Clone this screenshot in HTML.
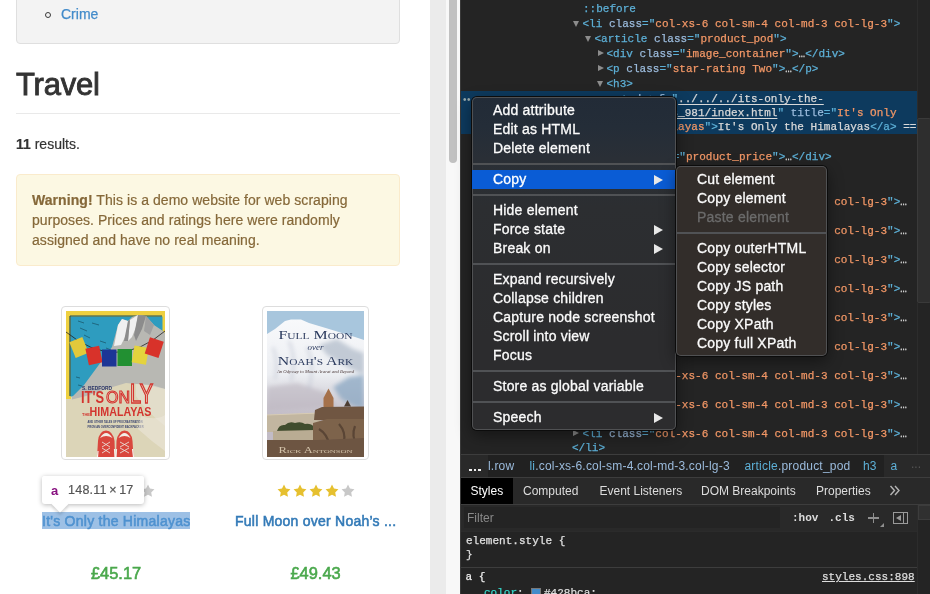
<!DOCTYPE html>
<html><head><meta charset="utf-8"><style>
*{margin:0;padding:0;box-sizing:border-box}
html,body{width:930px;height:594px;overflow:hidden;background:#fff;font-family:"Liberation Sans",sans-serif}
body{position:relative}
.a{position:absolute;white-space:nowrap}
.m{position:absolute;white-space:nowrap;font-family:"Liberation Mono",monospace;font-size:11px;line-height:14px;color:#d5d5d5;-webkit-text-stroke:.25px currentColor;letter-spacing:.02px}
.tg{color:#5db0d7}.an{color:#9bbbdc}.av{color:#f29766}.tx{color:#d9d9d9}.q{color:#a3bfd9}
.u{text-decoration:underline;text-underline-offset:2px}
.tri{position:absolute;width:0;height:0}
.td{border-left:3.5px solid transparent;border-right:3.5px solid transparent;border-top:6px solid #8c8c8c}
.tr{border-top:3.5px solid transparent;border-bottom:3.5px solid transparent;border-left:6px solid #8c8c8c}
.menu{position:absolute;border-radius:5px;box-shadow:0 0 0 1px #0c0c0c,inset 0 0 0 1px #505153,0 5px 16px rgba(0,0,0,.45)}
.mi{position:absolute;left:0;right:0;height:19px;font-size:14px;line-height:19px;color:#fbfbfb;padding-left:21px;letter-spacing:.2px;white-space:nowrap;-webkit-text-stroke:.3px currentColor}
.mi.sel{background:#0a5cd5;color:#fff}
.mi.dis{color:#6b6b6b}
.sep{position:absolute;left:1px;right:1px;height:2px;background:#505255}
.arr{position:absolute;right:13px;top:5px;width:0;height:0;border-left:9px solid #e8e8e8;border-top:5px solid transparent;border-bottom:5px solid transparent}
</style></head><body>
<div style="position:absolute;left:0;top:0;width:930px;height:594px;overflow:hidden;will-change:transform">
<div class="a" style="left:16px;top:-10px;width:384px;height:54px;background:#f3f3f3;border:1px solid #dfdfdf;border-radius:4px"></div>
<div class="a" style="left:45px;top:11.8px;width:6px;height:6px;border:1.7px solid #3a3a3a;border-radius:50%"></div>
<div class="a" style="left:61px;top:6px;font-size:14px;line-height:16px;color:#428bca;-webkit-text-stroke:.25px currentColor">Crime</div>
<div class="a" style="left:16px;top:67px;font-size:31px;line-height:35px;color:#333;-webkit-text-stroke:.9px #333;letter-spacing:-.2px">Travel</div>
<div class="a" style="left:16px;top:113px;width:384px;height:1px;background:#e9e9e9"></div>
<div class="a" style="left:16px;top:136px;font-size:14px;line-height:16px;color:#333;-webkit-text-stroke:.2px currentColor"><b>11</b> results.</div>
<div class="a" style="left:16px;top:174px;width:384px;height:92px;background:#fcf8e3;border:1px solid #faebcc;border-radius:4px"></div>
<div class="a" style="left:32px;top:190px;font-size:14px;line-height:20px;color:#86693a;-webkit-text-stroke:.2px currentColor;letter-spacing:.06px"><b>Warning!</b> This is a demo website for web scraping<br>purposes. Prices and ratings here were randomly<br>assigned and have no real meaning.</div>
<div class="a" style="left:61px;top:306px;width:109px;height:154px;border:1px solid #ddd;border-radius:4px;background:#fff"></div>
<div class="a" style="left:262px;top:306px;width:107px;height:154px;border:1px solid #ddd;border-radius:4px;background:#fff"></div>
<svg class="a" style="left:66px;top:310.5px" width="99" height="146" viewBox="0 0 99 146">
<defs><filter id="bl1" x="-5%" y="-5%" width="110%" height="110%"><feGaussianBlur stdDeviation=".45"/></filter></defs>
<g filter="url(#bl1)">
<rect width="99" height="146" fill="#dcd5b8"/>
<path d="M0 0 H99 V24 H96 V6 H5 V88 H0 Z" fill="#eed040"/>
<rect x="4.5" y="5.5" width="92" height="80" fill="#2d9cbf"/>
<path d="M4 5 H96 M4 5 V85" stroke="#1d4a5a" stroke-width="1.2"/>
<path d="M6 86 L18 74 L46 36 L52 14 L56 8 L62 10 L66 6 L72 4 L80 5 L88 14 L97 20 L99 22 L99 100 L6 100 Z" fill="#b8b8b3"/>
<path d="M48 35 L52 14 L56 8 L62 10 L60 24 L55 34 Z M64 9 L72 4 L70 16 L66 26 L62 30 Z" fill="#f0f0f0"/>
<path d="M62 10 L64 9 L62 30 L58 30 Z M72 4 L80 5 L76 18 L70 30 L68 24 Z" fill="#8c8c8c"/>
<path d="M80 5 L88 14 L84 24 L78 20 Z" fill="#a0a0a0"/>
<path d="M0 90 L20 85 L40 78 L60 72 L80 74 L99 78 L99 146 L0 146 Z" fill="#dcd5b8"/>
<path d="M70 73 L86 74 L99 78 L99 115 Q80 100 70 85 Z" fill="#e6e2d6" opacity=".6"/>
<path d="M12 10 l6 2 M14 17 l7 3 M26 12 l7 2 M18 24 l6 3 M34 30 l6 2 M40 37 l5 2 M10 66 l4 1 M12 74 l4 1" stroke="#1d5a70" stroke-width=".8"/>
<path d="M0 21 Q50 62 99 20" fill="none" stroke="#222" stroke-width=".8"/>
<rect x="6" y="28" width="14" height="17" fill="#e2c93a" transform="rotate(-22 13 36.5)"/>
<rect x="21" y="36" width="14" height="17" fill="#d8322c" transform="rotate(-12 28 44.5)"/>
<rect x="36" y="38.5" width="14.5" height="17" fill="#1f3596"/>
<rect x="51.5" y="38" width="14.5" height="17" fill="#229033"/>
<rect x="67" y="35.5" width="14.5" height="17" fill="#e4d33c" transform="rotate(10 74 44)"/>
<rect x="81" y="28" width="14.5" height="17" fill="#d8322c" transform="rotate(18 88 36.5)"/>
<text x="16" y="78.5" font-family="Liberation Sans" font-weight="bold" font-size="6.2" fill="#2b3566" textLength="30" lengthAdjust="spacingAndGlyphs">S. BEDFORD</text>
<text x="15" y="92" font-family="Liberation Sans" font-weight="bold" font-size="16" fill="#d3352f" textLength="23" lengthAdjust="spacingAndGlyphs">IT'S</text>
<text x="40" y="92" font-family="Liberation Sans" font-size="17" fill="#ecdcc8" stroke="#d3352f" stroke-width="1.1" textLength="24" lengthAdjust="spacingAndGlyphs">ON</text>
<text x="64" y="92" font-family="Liberation Sans" font-size="27" fill="#ecdcc8" stroke="#d3352f" stroke-width="1.5" textLength="23" lengthAdjust="spacingAndGlyphs">LY</text>
<text x="16" y="105.3" font-family="Liberation Sans" font-weight="bold" font-size="4" fill="#d3352f">THE</text>
<text x="23.6" y="105.3" font-family="Liberation Sans" font-weight="bold" font-size="13.5" fill="#d3352f" textLength="61.7" lengthAdjust="spacingAndGlyphs">HIMALAYAS</text>
<text x="21.6" y="111.9" font-family="Liberation Sans" font-weight="bold" font-size="3.2" fill="#3a4470" textLength="55" lengthAdjust="spacingAndGlyphs">AND OTHER TALES OF PROCRASTINATION</text>
<text x="21.6" y="117" font-family="Liberation Sans" font-weight="bold" font-size="3.2" fill="#3a4470" textLength="56" lengthAdjust="spacingAndGlyphs">FROM AN OVERCONFIDENT BACKPACKER</text>
<path d="M31 146 L32 130 Q33 120 40 119.5 Q47 120 48.5 130 L49 146 Z" fill="#d9473d"/>
<path d="M50 146 L50.5 130 Q52 120 58.5 119.5 Q65.5 120 66.5 130 L67.5 146 Z" fill="#d9473d"/>
<path d="M34 127 Q40 117 46.5 127 Q40 123 34 127 Z M52.5 127 Q58.5 117 64.5 127 Q58.5 123 52.5 127 Z" fill="#f2ede6"/>
<path d="M36 131 L44 136 M44 131 L36 136 M36 137 L44 142 M44 137 L36 142 M54 131 L63 136 M63 131 L54 136 M54 137 L63 142 M63 137 L54 142" stroke="#e9ddd6" stroke-width=".9"/>
<path d="M32 140 L31.5 146 M48.5 138 L49 146 M50.5 138 L50 146 M66.5 138 L67.5 146" stroke="#f4eee8" stroke-width="1.2"/>
<path d="M75 105 Q90 110 99 104 L99 140 Q85 130 72 118 Z" fill="#ece8dc" opacity=".55"/>
</g>
</svg>
<svg class="a" style="left:267px;top:310.5px" width="97" height="146" viewBox="0 0 97 146">
<defs>
<filter id="bl2" x="-5%" y="-5%" width="110%" height="110%"><feGaussianBlur stdDeviation=".5"/></filter><filter id="bl3" x="-20%" y="-20%" width="140%" height="140%"><feGaussianBlur stdDeviation="2"/></filter>
<linearGradient id="mt" x1="0" y1="0" x2="0" y2="1"><stop offset="0" stop-color="#f8f9fb"/><stop offset=".4" stop-color="#eceef2"/><stop offset=".55" stop-color="#d6d5dc"/><stop offset=".7" stop-color="#c2bcc6"/></linearGradient>
</defs>
<g filter="url(#bl2)">
<rect width="97" height="146" fill="#a8c6dd"/>
<path d="M0 23 L8 18 L18 10 L24 8.5 L34 8.5 L42 12 L52 15 L62 18 L75 22 L88 26 L97 29 L97 146 L0 146 Z" fill="url(#mt)"/>
<g filter="url(#bl3)">
<path d="M52 34 L70 28 L86 38 L97 42 L97 64 L84 58 L70 50 L60 44 Z" fill="#aeb9c8" opacity=".7"/>
<path d="M66 76 L82 66 L97 64 L97 98 L86 95 L74 88 Z" fill="#8faac4" opacity=".8"/>
<path d="M0 76 L30 72 L60 82 L70 96 L0 100 Z" fill="#bdb6c0" opacity=".6"/>
<path d="M6 36 Q12 52 8 68 M22 30 Q30 48 24 70 M40 36 Q48 54 42 78" stroke="#b0b8c8" stroke-width="2" fill="none" opacity=".6"/>
</g>
<path d="M0 104 L53 102 L53 121 L0 121 Z" fill="#c2b6a0"/>
<path d="M0 104 L53 102" stroke="#d8ccb4" stroke-width="1"/>
<path d="M56.5 98 L56.5 87 L61.5 77.5 L66.5 87 L66.5 98 Z" fill="#a5714b"/>
<path d="M47 109 L48 99 L55 96 L97 95.5 L97 110 Z" fill="#6f5643"/>
<path d="M77 95.5 L80.5 89 L84 95.5 Z" fill="#4e3c30"/>
<path d="M10 120 Q12 113 18 114 Q22 110 28 112 Q34 110 38 113 Q44 112 47 116 L47 120 Z" fill="#414d2e"/>
<path d="M6 120 L48 119 L48 129 L6 130 Z" fill="#b9ac93"/>
<path d="M46 146 L46 112 L60 108 L97 108 L97 146 Z" fill="#7d644c"/>
<path d="M52 118 q8 5 10 15 M72 113 q7 8 5 18 M88 115 q-4 10 2 20" stroke="#5a4535" stroke-width="2.2" fill="none"/>
<path d="M0 129 L50 129 L97 127 L97 146 L0 146 Z" fill="#6d5543"/>
<text x="48.5" y="28.1" text-anchor="middle" font-family="Liberation Serif" font-size="12.5" fill="#2b3a5e" style="font-variant:small-caps" textLength="74" lengthAdjust="spacingAndGlyphs">Full Moon</text>
<text x="48.5" y="38.5" text-anchor="middle" font-family="Liberation Serif" font-style="italic" font-size="8" fill="#2b3a5e" textLength="16" lengthAdjust="spacingAndGlyphs">over</text>
<text x="48.5" y="53.7" text-anchor="middle" font-family="Liberation Serif" font-size="12.5" fill="#2b3a5e" style="font-variant:small-caps" textLength="75.5" lengthAdjust="spacingAndGlyphs">Noah's Ark</text>
<text x="48.5" y="61.8" text-anchor="middle" font-family="Liberation Serif" font-style="italic" font-size="4.2" fill="#4a3838" textLength="77" lengthAdjust="spacingAndGlyphs">An Odyssey to Mount Ararat and Beyond</text>
<text x="48.5" y="141.6" text-anchor="middle" font-family="Liberation Serif" font-size="7.5" fill="#d3c3a9" style="font-variant:small-caps" textLength="74" lengthAdjust="spacingAndGlyphs">Rick Antonson</text>
</g>
</svg>
<svg class="a" style="left:76.5px;top:483.5px" width="14" height="14" viewBox="0 0 24 24"><path d="M12 1l3.4 6.9 7.6 1.1-5.5 5.4 1.3 7.6L12 18.4l-6.8 3.6 1.3-7.6L1 9l7.6-1.1z" fill="#e6c02f"/></svg>
<svg class="a" style="left:92.5px;top:483.5px" width="14" height="14" viewBox="0 0 24 24"><path d="M12 1l3.4 6.9 7.6 1.1-5.5 5.4 1.3 7.6L12 18.4l-6.8 3.6 1.3-7.6L1 9l7.6-1.1z" fill="#e6c02f"/></svg>
<svg class="a" style="left:108.5px;top:483.5px" width="14" height="14" viewBox="0 0 24 24"><path d="M12 1l3.4 6.9 7.6 1.1-5.5 5.4 1.3 7.6L12 18.4l-6.8 3.6 1.3-7.6L1 9l7.6-1.1z" fill="#c8c8c8"/></svg>
<svg class="a" style="left:124.5px;top:483.5px" width="14" height="14" viewBox="0 0 24 24"><path d="M12 1l3.4 6.9 7.6 1.1-5.5 5.4 1.3 7.6L12 18.4l-6.8 3.6 1.3-7.6L1 9l7.6-1.1z" fill="#c8c8c8"/></svg>
<svg class="a" style="left:140.5px;top:483.5px" width="14" height="14" viewBox="0 0 24 24"><path d="M12 1l3.4 6.9 7.6 1.1-5.5 5.4 1.3 7.6L12 18.4l-6.8 3.6 1.3-7.6L1 9l7.6-1.1z" fill="#c8c8c8"/></svg>
<svg class="a" style="left:276.5px;top:483.5px" width="14" height="14" viewBox="0 0 24 24"><path d="M12 1l3.4 6.9 7.6 1.1-5.5 5.4 1.3 7.6L12 18.4l-6.8 3.6 1.3-7.6L1 9l7.6-1.1z" fill="#e6c02f"/></svg>
<svg class="a" style="left:292.5px;top:483.5px" width="14" height="14" viewBox="0 0 24 24"><path d="M12 1l3.4 6.9 7.6 1.1-5.5 5.4 1.3 7.6L12 18.4l-6.8 3.6 1.3-7.6L1 9l7.6-1.1z" fill="#e6c02f"/></svg>
<svg class="a" style="left:308.5px;top:483.5px" width="14" height="14" viewBox="0 0 24 24"><path d="M12 1l3.4 6.9 7.6 1.1-5.5 5.4 1.3 7.6L12 18.4l-6.8 3.6 1.3-7.6L1 9l7.6-1.1z" fill="#e6c02f"/></svg>
<svg class="a" style="left:324.5px;top:483.5px" width="14" height="14" viewBox="0 0 24 24"><path d="M12 1l3.4 6.9 7.6 1.1-5.5 5.4 1.3 7.6L12 18.4l-6.8 3.6 1.3-7.6L1 9l7.6-1.1z" fill="#e6c02f"/></svg>
<svg class="a" style="left:340.5px;top:483.5px" width="14" height="14" viewBox="0 0 24 24"><path d="M12 1l3.4 6.9 7.6 1.1-5.5 5.4 1.3 7.6L12 18.4l-6.8 3.6 1.3-7.6L1 9l7.6-1.1z" fill="#c8c8c8"/></svg>
<div class="a" style="left:42px;top:512px;width:148px;height:17px;background:#9dc0e5"></div>
<div class="a" style="left:42px;top:513px;font-size:14px;line-height:17px;color:#4f92d0;letter-spacing:.25px;-webkit-text-stroke:.55px currentColor">It's Only the Himalayas</div>
<div class="a" style="left:235px;top:513px;font-size:14px;line-height:17px;color:#337ab7;letter-spacing:.24px;-webkit-text-stroke:.55px currentColor">Full Moon over Noah’s ...</div>
<div class="a" style="left:91px;top:564px;font-size:16.4px;line-height:19px;color:#4aa84c;-webkit-text-stroke:.6px currentColor">£45.17</div>
<div class="a" style="left:290.5px;top:564px;font-size:16.4px;line-height:19px;color:#4aa84c;-webkit-text-stroke:.6px currentColor">£49.43</div>
<div class="a" style="left:42px;top:476px;width:102px;height:28px;background:#fff;border-radius:3px;box-shadow:0 1px 5px rgba(0,0,0,.28)"></div>
<div class="a" style="left:54px;top:498px;width:12px;height:12px;background:#fff;transform:rotate(45deg);box-shadow:2px 2px 3px rgba(0,0,0,.15)"></div>
<div class="a" style="left:42px;top:476px;width:102px;height:26px;background:#fff;border-radius:3px"></div>
<div class="a" style="left:51px;top:483px;font-size:13px;line-height:15px;color:#881280;font-weight:bold">a</div>
<div class="a" style="left:68px;top:483px;font-size:12.5px;line-height:15px;color:#555;letter-spacing:.25px;-webkit-text-stroke:.2px currentColor">148.11<span style="letter-spacing:0"> × </span>17</div>
<div class="a" style="left:430px;top:0;width:16px;height:594px;background:#ebebeb"></div>
<div class="a" style="left:446px;top:0;width:14px;height:594px;background:#f8f8f8"></div>
<div class="a" style="left:449px;top:-6px;width:8px;height:169px;background:#c1c1c1;border-radius:4px"></div>
<div class="a" style="left:460px;top:0;width:470px;height:594px;background:#242424"></div>
<div class="a" style="left:460px;top:0;width:1px;height:594px;background:#3a3a3a"></div>
<div class="a" style="left:461px;top:91px;width:456px;height:43px;background:#0d3a5e"></div>
<div class="a" style="left:463px;top:97px;font-size:10px;line-height:6px;color:#9aa;letter-spacing:.5px">••</div>
<div class="m" style="left:583px;top:2px"><span class="tg">::before</span></div>
<div class="tri td" style="left:573px;top:21px"></div><div class="m" style="left:582.5px;top:17px"><span class="tg">&lt;li</span><span class="an"> class</span><span class="tg">="</span><span class="av">col-xs-6 col-sm-4 col-md-3 col-lg-3</span><span class="tg">"</span><span class="tg">&gt;</span></div>
<div class="tri td" style="left:585px;top:36px"></div><div class="m" style="left:594.5px;top:32px"><span class="tg">&lt;article</span><span class="an"> class</span><span class="tg">="</span><span class="av">product_pod</span><span class="tg">"</span><span class="tg">&gt;</span></div>
<div class="tri tr" style="left:597.5px;top:50px"></div><div class="m" style="left:606.5px;top:47px"><span class="tg">&lt;div</span><span class="an"> class</span><span class="tg">="</span><span class="av">image_container</span><span class="tg">"</span><span class="tg">&gt;</span><span class="tx">…</span><span class="tg">&lt;/div&gt;</span></div>
<div class="tri tr" style="left:597.5px;top:65px"></div><div class="m" style="left:606.5px;top:62px"><span class="tg">&lt;p</span><span class="an"> class</span><span class="tg">="</span><span class="av">star-rating Two</span><span class="tg">"</span><span class="tg">&gt;</span><span class="tx">…</span><span class="tg">&lt;/p&gt;</span></div>
<div class="tri td" style="left:597px;top:81px"></div><div class="m" style="left:606.5px;top:77px"><span class="tg">&lt;h3&gt;</span></div>
<div class="m" style="left:618.5px;top:92px"><span class="tg">&lt;a</span><span class="an"> href</span><span class="tg">="</span><span class="tx u">../../../its-only-the-</span></div>
<div class="m" style="left:618.5px;top:106px"><span class="tx u">himalayas_981/index.html</span><span class="tg">"</span><span class="an"> title</span><span class="tg">="</span><span class="av">It's Only</span></div>
<div class="m" style="left:618.5px;top:120px"><span class="av">the Himalayas</span><span class="tg">"</span><span class="tg">&gt;</span><span class="tx">It's Only the Himalayas</span><span class="tg">&lt;/a&gt;</span><span class="tx"> == $0</span></div>
<div class="m" style="left:606.5px;top:135px"><span class="tg">&lt;/h3&gt;</span></div>
<div class="tri tr" style="left:597.5px;top:153px"></div><div class="m" style="left:606.5px;top:150px"><span class="tg">&lt;div</span><span class="an"> class</span><span class="tg">="</span><span class="av">product_price</span><span class="tg">"</span><span class="tg">&gt;</span><span class="tx">…</span><span class="tg">&lt;/div&gt;</span></div>
<div class="m" style="left:594.5px;top:165px"><span class="tg">&lt;/article&gt;</span></div>
<div class="m" style="left:582.5px;top:180px"><span class="tg">&lt;/li&gt;</span></div>
<div class="tri tr" style="left:573px;top:198px"></div><div class="m" style="left:582.5px;top:195px"><span class="tg">&lt;li</span><span class="an"> class</span><span class="tg">="</span><span class="av">col-xs-6 col-sm-4 col-md-3 col-lg-3</span><span class="tg">"</span><span class="tg">&gt;</span><span class="tx">…</span></div>
<div class="m" style="left:572px;top:209px"><span class="tg">&lt;/li&gt;</span></div>
<div class="tri tr" style="left:573px;top:227px"></div><div class="m" style="left:582.5px;top:224px"><span class="tg">&lt;li</span><span class="an"> class</span><span class="tg">="</span><span class="av">col-xs-6 col-sm-4 col-md-3 col-lg-3</span><span class="tg">"</span><span class="tg">&gt;</span><span class="tx">…</span></div>
<div class="m" style="left:572px;top:238px"><span class="tg">&lt;/li&gt;</span></div>
<div class="tri tr" style="left:573px;top:256px"></div><div class="m" style="left:582.5px;top:253px"><span class="tg">&lt;li</span><span class="an"> class</span><span class="tg">="</span><span class="av">col-xs-6 col-sm-4 col-md-3 col-lg-3</span><span class="tg">"</span><span class="tg">&gt;</span><span class="tx">…</span></div>
<div class="m" style="left:572px;top:267px"><span class="tg">&lt;/li&gt;</span></div>
<div class="tri tr" style="left:573px;top:285px"></div><div class="m" style="left:582.5px;top:282px"><span class="tg">&lt;li</span><span class="an"> class</span><span class="tg">="</span><span class="av">col-xs-6 col-sm-4 col-md-3 col-lg-3</span><span class="tg">"</span><span class="tg">&gt;</span><span class="tx">…</span></div>
<div class="m" style="left:572px;top:296px"><span class="tg">&lt;/li&gt;</span></div>
<div class="tri tr" style="left:573px;top:314px"></div><div class="m" style="left:582.5px;top:311px"><span class="tg">&lt;li</span><span class="an"> class</span><span class="tg">="</span><span class="av">col-xs-6 col-sm-4 col-md-3 col-lg-3</span><span class="tg">"</span><span class="tg">&gt;</span><span class="tx">…</span></div>
<div class="m" style="left:572px;top:325px"><span class="tg">&lt;/li&gt;</span></div>
<div class="tri tr" style="left:573px;top:343px"></div><div class="m" style="left:582.5px;top:340px"><span class="tg">&lt;li</span><span class="an"> class</span><span class="tg">="</span><span class="av">col-xs-6 col-sm-4 col-md-3 col-lg-3</span><span class="tg">"</span><span class="tg">&gt;</span><span class="tx">…</span></div>
<div class="m" style="left:572px;top:354px"><span class="tg">&lt;/li&gt;</span></div>
<div class="tri tr" style="left:573px;top:372px"></div><div class="m" style="left:582.5px;top:369px"><span class="tg">&lt;li</span><span class="an"> class</span><span class="tg">="</span><span class="av">col-xs-6 col-sm-4 col-md-3 col-lg-3</span><span class="tg">"</span><span class="tg">&gt;</span><span class="tx">…</span></div>
<div class="m" style="left:572px;top:383px"><span class="tg">&lt;/li&gt;</span></div>
<div class="tri tr" style="left:573px;top:401px"></div><div class="m" style="left:582.5px;top:398px"><span class="tg">&lt;li</span><span class="an"> class</span><span class="tg">="</span><span class="av">col-xs-6 col-sm-4 col-md-3 col-lg-3</span><span class="tg">"</span><span class="tg">&gt;</span><span class="tx">…</span></div>
<div class="m" style="left:572px;top:412px"><span class="tg">&lt;/li&gt;</span></div>
<div class="tri tr" style="left:573px;top:430px"></div><div class="m" style="left:582.5px;top:427px"><span class="tg">&lt;li</span><span class="an"> class</span><span class="tg">="</span><span class="av">col-xs-6 col-sm-4 col-md-3 col-lg-3</span><span class="tg">"</span><span class="tg">&gt;</span><span class="tx">…</span></div>
<div class="m" style="left:572px;top:441px"><span class="tg">&lt;/li&gt;</span></div>
<div class="a" style="left:917px;top:0;width:13px;height:454px;background:#242424;border-left:1px solid #2c2c2c"></div>
<div class="a" style="left:917px;top:118px;width:14px;height:185px;background:#2e2e2e;border:1px solid #3a3a3a;border-radius:2px"></div>
<div class="a" style="left:461px;top:454px;width:469px;height:1px;background:#3d3d3d"></div>
<div class="a" style="left:461px;top:455px;width:469px;height:22px;background:#212121"></div>
<div class="a" style="left:461px;top:455px;width:27px;height:22px;background:#292929"></div>
<div class="a" style="left:469px;top:468.5px;width:2.5px;height:2.5px;background:#f0f0f0"></div><div class="a" style="left:473.5px;top:468.5px;width:2.5px;height:2.5px;background:#f0f0f0"></div><div class="a" style="left:478px;top:468.5px;width:2.5px;height:2.5px;background:#f0f0f0"></div>
<div class="a" style="left:884px;top:455px;width:46px;height:22px;background:#292929"></div>
<div class="a" style="left:488px;top:459px;font-size:12px;line-height:14px;color:#9bbbdc;letter-spacing:.2px"><span style="color:#5db0d7"></span>l.row</div>
<div class="a" style="left:529.5px;top:459px;font-size:12px;line-height:14px;color:#9bbbdc;letter-spacing:.2px"><span style="color:#5db0d7">li</span>.col-xs-6.col-sm-4.col-md-3.col-lg-3</div>
<div class="a" style="left:744.5px;top:459px;font-size:12px;line-height:14px;color:#9bbbdc;letter-spacing:.2px"><span style="color:#5db0d7">article</span>.product_pod</div>
<div class="a" style="left:863px;top:459px;font-size:12px;line-height:14px;color:#9bbbdc;letter-spacing:.2px"><span style="color:#5db0d7">h3</span></div>
<div class="a" style="left:890.5px;top:459px;font-size:12px;line-height:14px;color:#9bbbdc;letter-spacing:.2px"><span style="color:#5db0d7">a</span></div>
<div class="a" style="left:911px;top:457px;font-size:12px;line-height:14px;color:#555">...</div>
<div class="a" style="left:461px;top:477px;width:469px;height:1px;background:#3d3d3d"></div>
<div class="a" style="left:461px;top:478px;width:469px;height:26px;background:#292929"></div>
<div class="a" style="left:461px;top:478px;width:52px;height:26px;background:#000"></div>
<div class="a" style="left:470.5px;top:484px;font-size:12px;line-height:14px;color:#fff">Styles</div>
<div class="a" style="left:523px;top:484px;font-size:12px;line-height:14px;color:#ddd">Computed</div>
<div class="a" style="left:599.5px;top:484px;font-size:12px;line-height:14px;color:#ddd">Event Listeners</div>
<div class="a" style="left:701px;top:484px;font-size:12px;line-height:14px;color:#ddd">DOM Breakpoints</div>
<div class="a" style="left:816px;top:484px;font-size:12px;line-height:14px;color:#ddd">Properties</div>
<svg class="a" style="left:889px;top:485px" width="12" height="11" viewBox="0 0 12 11"><path d="M1.5 1 L5.5 5.5 L1.5 10 M6 1 L10 5.5 L6 10" fill="none" stroke="#b5b5b5" stroke-width="1.4"/></svg>
<div class="a" style="left:461px;top:504px;width:469px;height:1px;background:#3d3d3d"></div>
<div class="a" style="left:461px;top:505px;width:456px;height:26px;background:#292929"></div>
<div class="a" style="left:464px;top:507px;width:316px;height:21px;background:#242424"></div>
<div class="a" style="left:467px;top:511px;font-size:12px;line-height:14px;color:#8a8a8a">Filter</div>
<div class="a" style="left:792px;top:511px;font-family:'Liberation Mono';font-weight:bold;font-size:11px;line-height:14px;color:#ddd">:hov</div>
<div class="a" style="left:828.5px;top:511px;font-family:'Liberation Mono';font-weight:bold;font-size:11px;line-height:14px;color:#ddd">.cls</div>
<div class="a" style="left:868px;top:517.3px;width:10.5px;height:1.5px;background:#8f8f8f"></div><div class="a" style="left:872.5px;top:512.8px;width:1.5px;height:10.5px;background:#8f8f8f"></div>
<div class="a" style="left:879.5px;top:523px;width:0;height:0;border-left:4.5px solid transparent;border-bottom:4.5px solid #8f8f8f"></div>
<div class="a" style="left:893px;top:512px;width:15px;height:12px;border:1px solid #9a9a9a"></div><div class="a" style="left:903px;top:512px;width:1px;height:12px;background:#9a9a9a"></div><div class="a" style="left:896px;top:515px;width:0;height:0;border-right:5px solid #9a9a9a;border-top:3px solid transparent;border-bottom:3px solid transparent"></div>
<div class="a" style="left:917px;top:505px;width:13px;height:89px;background:#242424;border-left:1px solid #2c2c2c"></div>
<div class="a" style="left:917.5px;top:505px;width:13px;height:14.5px;background:#303030;border:1px solid #3c3c3c"></div>
<div class="a" style="left:461px;top:531px;width:456px;height:1px;background:#2b2b2b"></div>
<div class="m" style="left:466px;top:534px;color:#e0e0e0">element.style {</div>
<div class="m" style="left:466px;top:548px;color:#e0e0e0">}</div>
<div class="a" style="left:461px;top:567px;width:456px;height:1px;background:#3d3d3d"></div>
<div class="m" style="left:465.5px;top:570px;color:#f0f0f0">a {</div>
<div class="m" style="left:822px;top:570px;color:#ddd;text-decoration:underline">styles.css:898</div>
<div class="m" style="left:484px;top:586px;color:#35d4c7">color<span style="color:#ddd">: </span></div>
<div class="a" style="left:531px;top:587.5px;width:10px;height:10px;background:#428bca;border:1px solid #777"></div>
<div class="m" style="left:544px;top:586px;color:#ddd">#428bca;</div>
<div class="menu" style="left:472px;top:97px;width:204px;height:333px;background:linear-gradient(#222b37 0px,#242d38 30px,#2a2f36 62px,#2c2e31 110px,#2c2c2e 240px)"></div>
<div class="a" style="left:472px;top:97px;width:204px;height:333px">
<div class="mi" style="top:4px">Add attribute</div>
<div class="mi" style="top:23px">Edit as HTML</div>
<div class="mi" style="top:42px">Delete element</div>
<div class="sep" style="top:66px"></div>
<div class="mi sel" style="top:73px">Copy<div class="arr"></div></div>
<div class="sep" style="top:97px"></div>
<div class="mi" style="top:104px">Hide element</div>
<div class="mi" style="top:123px">Force state<div class="arr"></div></div>
<div class="mi" style="top:142px">Break on<div class="arr"></div></div>
<div class="sep" style="top:166px"></div>
<div class="mi" style="top:173px">Expand recursively</div>
<div class="mi" style="top:192px">Collapse children</div>
<div class="mi" style="top:211px">Capture node screenshot</div>
<div class="mi" style="top:230px">Scroll into view</div>
<div class="mi" style="top:249px">Focus</div>
<div class="sep" style="top:273px"></div>
<div class="mi" style="top:280px">Store as global variable</div>
<div class="sep" style="top:304px"></div>
<div class="mi" style="top:311px">Speech<div class="arr"></div></div>
</div>
<div class="menu" style="left:676px;top:166px;width:151px;height:190px;background:#322d2a"></div>
<div class="a" style="left:676px;top:166px;width:151px;height:190px">
<div class="mi" style="top:4px">Cut element</div>
<div class="mi" style="top:23px">Copy element</div>
<div class="mi dis" style="top:42px">Paste element</div>
<div class="sep" style="top:66px"></div>
<div class="mi" style="top:73px">Copy outerHTML</div>
<div class="mi" style="top:92px">Copy selector</div>
<div class="mi" style="top:111px">Copy JS path</div>
<div class="mi" style="top:130px">Copy styles</div>
<div class="mi" style="top:149px">Copy XPath</div>
<div class="mi" style="top:168px">Copy full XPath</div>
</div>
</div></body></html>
